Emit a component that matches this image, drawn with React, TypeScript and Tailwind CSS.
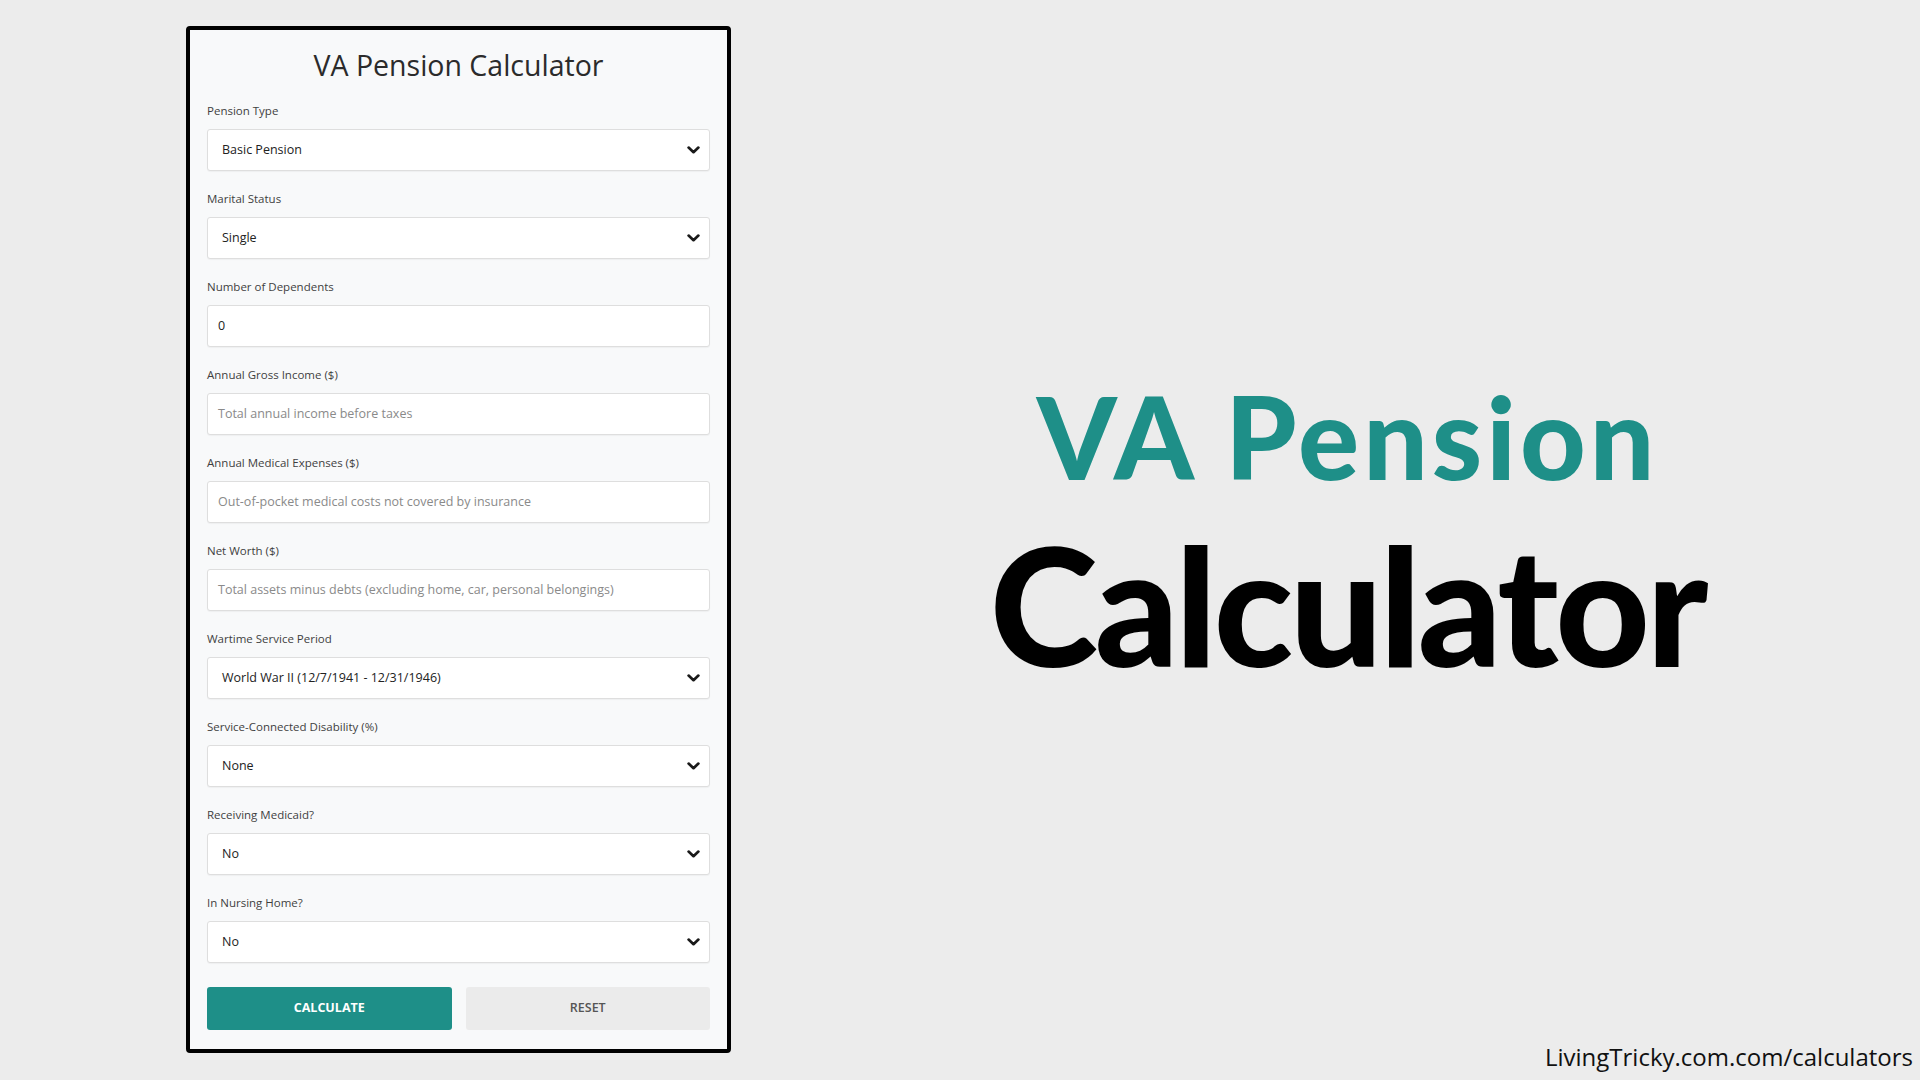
import React from "react";

type Field = {
  label: string;
  kind: "select" | "input";
  value?: string;
  placeholder?: string;
};

const FIELDS: Field[] = [
  { label: "Pension Type", kind: "select", value: "Basic Pension" },
  { label: "Marital Status", kind: "select", value: "Single" },
  { label: "Number of Dependents", kind: "input", value: "0" },
  { label: "Annual Gross Income ($)", kind: "input", placeholder: "Total annual income before taxes" },
  { label: "Annual Medical Expenses ($)", kind: "input", placeholder: "Out-of-pocket medical costs not covered by insurance" },
  { label: "Net Worth ($)", kind: "input", placeholder: "Total assets minus debts (excluding home, car, personal belongings)" },
  { label: "Wartime Service Period", kind: "select", value: "World War II (12/7/1941 - 12/31/1946)" },
  { label: "Service-Connected Disability (%)", kind: "select", value: "None" },
  { label: "Receiving Medicaid?", kind: "select", value: "No" },
  { label: "In Nursing Home?", kind: "select", value: "No" },
];

const Chevron = () => (
  <svg width="13" height="8" viewBox="0 0 13 8" fill="none">
    <polyline
      points="1.6,1.6 6.5,6.2 11.4,1.6"
      stroke="#1a1a1a"
      strokeWidth="2.7"
      strokeLinecap="round"
      strokeLinejoin="round"
    />
  </svg>
);

const FormField = ({ field }: { field: Field }) => {
  return (
    <div className="flex flex-col">
      <div className="h-[16px] leading-[16px] text-[11.5px] text-[#3f3f3f] mb-[10px]">{field.label}</div>
      {field.kind === "select" ? (
        <div className="h-[42px] bg-white border border-[#dedede] rounded-[3px] shadow-[0_1px_1px_rgba(0,0,0,0.04)] flex items-center justify-between pl-[14px] pr-[9px]">
          <span className="text-[12.5px] text-[#222]">{field.value}</span>
          <Chevron />
        </div>
      ) : (
        <div className="h-[42px] bg-white border border-[#dedede] rounded-[3px] shadow-[0_1px_1px_rgba(0,0,0,0.04)] flex items-center pl-[10px]">
          {field.value ? (
            <span className="text-[12.5px] text-[#222]">{field.value}</span>
          ) : (
            <span className="text-[12.5px] text-[#8a8a8a]">{field.placeholder}</span>
          )}
        </div>
      )}
    </div>
  );
};

const App = () => {
  return (
    <div className="w-[1920px] h-[1080px] bg-[#ececec] flex overflow-hidden font-['Open_Sans',sans-serif]">
      <div className="pl-[186px] pt-[26px]">
        <div className="w-[545px] border-[4px] border-black rounded-[4px] bg-[#f8f9fa] px-[17px] pt-[16px] pb-[19px] flex flex-col">
          <h1 className="text-center text-[28.5px] leading-[38px] text-[#2b2b2b] font-medium mb-[19px]">
            VA Pension Calculator
          </h1>
          <div className="flex flex-col gap-[20px]">
            {FIELDS.map((f) => (
              <FormField key={f.label} field={f} />
            ))}
          </div>
          <div className="flex gap-[14px] mt-[24px]">
            <button className="flex-1 h-[43px] rounded-[3px] bg-[#1e8f88] text-white text-[12.5px] font-bold">
              CALCULATE
            </button>
            <button className="flex-1 h-[43px] rounded-[3px] bg-[#ebebeb] text-[#555] text-[12.5px] font-semibold">
              RESET
            </button>
          </div>
        </div>
      </div>
      <div className="flex-1 flex flex-col pl-[44px]">
        <div className="flex-1 flex flex-col items-center pt-[379px] font-['Lato',sans-serif] font-black">
          <div className="text-[114px] leading-none text-[#1e8f88] tracking-[0.035em]">VA Pension</div>
          <div className="text-[164px] leading-none text-black mt-[29px] tracking-[-0.02em]">Calculator</div>
        </div>
        <div className="text-right pr-[7px] pb-[8px] text-[24px] leading-[30px] text-[#111]">
          LivingTricky.com.com/calculators
        </div>
      </div>
    </div>
  );
};

export default App;
